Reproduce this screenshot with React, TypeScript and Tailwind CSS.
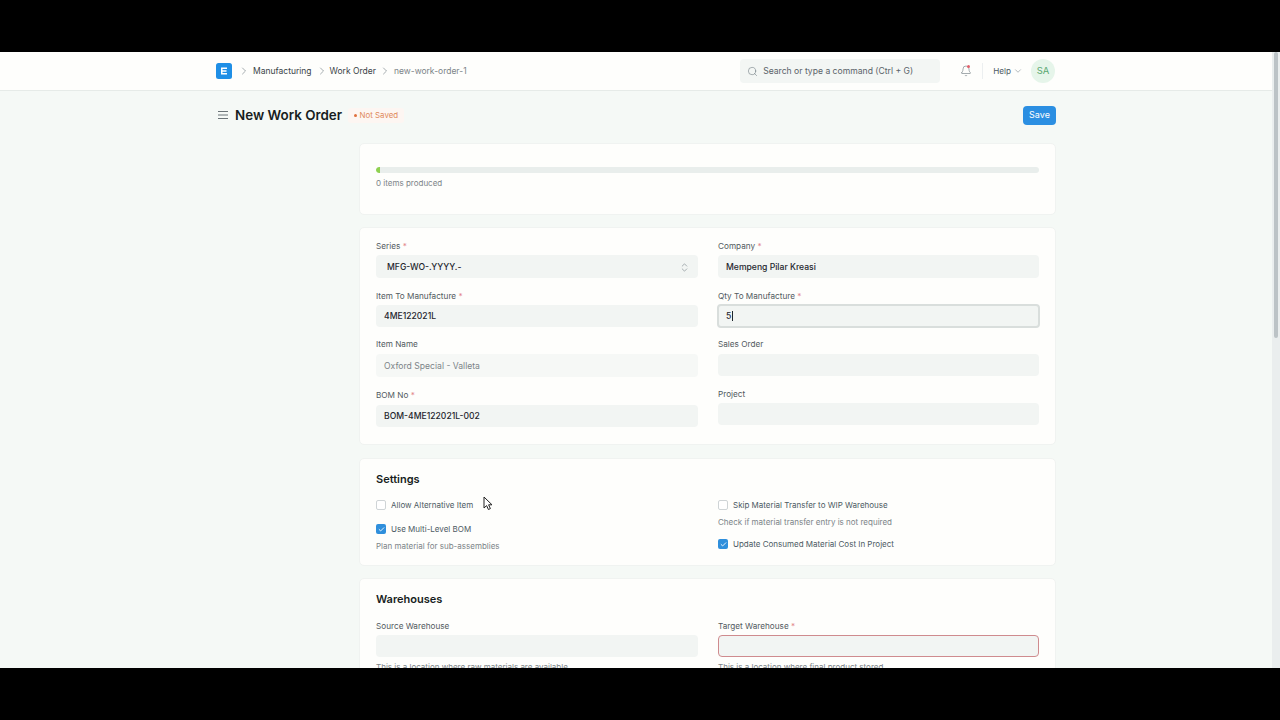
import { Bell, ChevronDown, ChevronRight, ChevronsUpDown, Search, Check } from "lucide-react";

function Label({ text, req }: { text: string; req?: boolean }) {
  return (
    <div className="h-[12px] leading-[12px] text-[8.2px] text-[#525a60] whitespace-nowrap">
      {text}
      {req && <span className="text-[#e2868c]"> *</span>}
    </div>
  );
}

function Box({ children, muted, focus, error, select, tall }: { children?: React.ReactNode; muted?: boolean; focus?: boolean; error?: boolean; select?: boolean; tall?: boolean }) {
  return (
    <div
      className={
        "rounded-[4px] flex items-center text-[8.6px] font-medium leading-none " +
        (tall ? "h-[23px] pt-[1px] " : focus ? "h-[24px] " : "h-[22px] ") +
        (focus
          ? "bg-[#f2f5f3] border-2 border-[#d9dedc] -mx-px pl-[7px] text-[#1f272e] "
          : error
            ? "bg-[#f2f5f3] border border-[#cf8b8e] px-2 text-[#1f272e] "
            : muted
              ? "bg-[#f6f8f6] px-2 text-[#7c8488] font-normal "
              : "bg-[#f2f5f3] px-2 text-[#1f272e] ") +
        (select ? "pl-[11px] justify-between" : "")
      }
    >
      {children}
    </div>
  );
}

function Checkbox({ on }: { on?: boolean }) {
  return on ? (
    <span className="w-[10px] h-[10px] rounded-[2px] bg-[#2f8fdc] flex items-center justify-center shrink-0">
      <Check size={7} strokeWidth={3} className="text-white" />
    </span>
  ) : (
    <span className="w-[10px] h-[10px] rounded-[2px] bg-white border border-[#cfd4d6] shrink-0" />
  );
}

function CheckRow({ on, text }: { on?: boolean; text: string }) {
  return (
    <div className="flex items-center gap-[5px] h-[12px] text-[8px] text-[#4c5a63] whitespace-nowrap">
      <Checkbox on={on} />
      {text}
    </div>
  );
}

function Hint({ text }: { text: string }) {
  return <div className="h-[12px] leading-[12px] text-[8px] text-[#7c8488] whitespace-nowrap">{text}</div>;
}

export default function App() {
  return (
    <div className="relative w-[1280px] h-[720px] bg-black overflow-hidden flex flex-col font-['Inter',sans-serif]">
      <div className="h-[52px] shrink-0" />
      <div className="h-[616px] shrink-0 flex overflow-hidden bg-[#f5f9f6]">
        <div className="flex-1 min-w-0 overflow-hidden">
          <header className="h-[39px] bg-[#fefefc] border-b border-[#e6ebe8] flex justify-center">
            <div className="w-[840px] flex items-center">
              <svg width="16" height="16" viewBox="0 0 16 16" className="shrink-0">
                <rect width="16" height="16" rx="2.5" fill="#1f8fe6" />
                <path d="M5 4.5h6v1.4H6.5v1.4H10.5v1.4H6.5v1.4H11v1.4H5z" fill="#fff" />
              </svg>
              <ChevronRight size={12} strokeWidth={1} className="ml-[6px] text-[#4c5a63]" />
              <span className="ml-[3px] text-[8.5px] text-[#3a4348]">Manufacturing</span>
              <ChevronRight size={12} strokeWidth={1} className="ml-[4px] text-[#4c5a63]" />
              <span className="ml-[2px] text-[8.5px] text-[#3a4348]">Work Order</span>
              <ChevronRight size={12} strokeWidth={1} className="ml-[3px] text-[#4c5a63]" />
              <span className="ml-[3px] text-[8.5px] text-[#7c8488]">new-work-order-1</span>
              <div className="ml-auto w-[200px] h-[24px] rounded-[4px] bg-[#f3f6f4] flex items-center pl-[7px] text-[8.6px] text-[#5a6268]">
                <Search size={11} strokeWidth={1} className="text-[#4c5a63]" />
                <span className="ml-[5px] whitespace-nowrap">Search or type a command (Ctrl + G)</span>
              </div>
              <div className="relative ml-[20px]">
                <Bell size={12} strokeWidth={1} className="text-[#4c5a63]" />
                <span className="absolute right-[2px] top-0 w-[3px] h-[3px] rounded-full bg-[#e2606a]" />
              </div>
              <span className="ml-[10px] w-px h-[16px] bg-[#eceff0]" />
              <span className="ml-[10px] text-[8.2px] text-[#4c5a63]">Help</span>
              <ChevronDown size={10} strokeWidth={1} className="ml-[2px] text-[#4c5a63]" />
              <span className="ml-[8px] w-[24px] h-[24px] mr-px rounded-full bg-[#e6f5ea] text-[#5aa870] text-[9.5px] flex items-center justify-center">SA</span>
            </div>
          </header>

          <div className="w-[840px] mx-auto">
            <div className="h-[48px] flex items-center">
              <svg width="12" height="12" viewBox="0 0 12 12" className="ml-[1px] shrink-0" stroke="#6b7478" strokeWidth="1">
                <path d="M1 2.5h10M1 6h10M1 9.5h10" />
              </svg>
              <h1 className="ml-[6px] mt-[1px] text-[13.4px] font-semibold text-[#171d21] leading-none whitespace-nowrap">New Work Order</h1>
              <span className="ml-[6px] mt-[1px] h-[15px] px-[6px] rounded-[3px] bg-[#fdf6f2] text-[7.9px] text-[#e08a5c] flex items-center gap-[3px] whitespace-nowrap">
                <span className="w-[2.5px] h-[2.5px] rounded-full bg-[#e0703c]" />
                Not Saved
              </span>
              <button className="ml-auto h-[19px] w-[33px] rounded-[4px] bg-[#2b8fe2] text-white text-[9px] flex items-center justify-center">Save</button>
            </div>

            <div className="ml-[143px] mt-[4px] flex flex-col">
              <section className="h-[72px] bg-[#fefefc] rounded-[5px] border border-[#f0f3f1] px-[16px] pt-[23px]">
                <div className="h-[6px] rounded-full bg-[#e9eeec] overflow-hidden">
                  <div className="w-[4px] h-full rounded-l-full bg-[#8fd14f]" />
                </div>
                <div className="mt-[4px] h-[12px] leading-[12px] text-[8px] text-[#7c8488]">0 items produced</div>
              </section>

              <section className="mt-[12px] h-[218px] bg-[#fefefc] rounded-[5px] border border-[#f0f3f1] px-[16px] pt-[12px] grid grid-cols-[322px_321px] gap-x-[20px] content-start">
                <div className="flex flex-col">
                  <Label text="Series" req />
                  <div className="mt-[3px]">
                    <Box select tall>
                      MFG-WO-.YYYY.-
                      <ChevronsUpDown size={11} strokeWidth={1} className="text-[#4c5a63]" />
                    </Box>
                  </div>
                  <div className="mt-[12px]"><Label text="Item To Manufacture" req /></div>
                  <div className="mt-[3px]"><Box>4ME122021L</Box></div>
                  <div className="mt-[11px]"><Label text="Item Name" /></div>
                  <div className="mt-[4px]"><Box muted tall>Oxford Special - Valleta</Box></div>
                  <div className="mt-[12px]"><Label text="BOM No" req /></div>
                  <div className="mt-[4px]"><Box>BOM-4ME122021L-002</Box></div>
                </div>
                <div className="flex flex-col">
                  <Label text="Company" req />
                  <div className="mt-[3px]"><Box tall>Mempeng Pilar Kreasi</Box></div>
                  <div className="mt-[12px]"><Label text="Qty To Manufacture" req /></div>
                  <div className="mt-[2px]">
                    <Box focus>
                      5<span className="ml-[1px] w-px h-[10px] bg-[#1f272e]" />
                    </Box>
                  </div>
                  <div className="mt-[10px]"><Label text="Sales Order" /></div>
                  <div className="mt-[4px]"><Box /></div>
                  <div className="mt-[12px]"><Label text="Project" /></div>
                  <div className="mt-[3px]"><Box /></div>
                </div>
              </section>

              <section className="mt-[13px] h-[108px] bg-[#fefefc] rounded-[5px] border border-[#f0f3f1] px-[16px] pt-[13px]">
                <h2 className="h-[14px] leading-[14px] text-[11px] font-semibold text-[#171d21]">Settings</h2>
                <div className="grid grid-cols-[322px_321px] gap-x-[20px] mt-[12px]">
                  <div className="flex flex-col pt-[1px]">
                    <CheckRow text="Allow Alternative Item" />
                    <div className="mt-[12px]"><CheckRow on text="Use Multi-Level BOM" /></div>
                    <div className="mt-[5px]"><Hint text="Plan material for sub-assemblies" /></div>
                  </div>
                  <div className="flex flex-col pt-[1px]">
                    <CheckRow text="Skip Material Transfer to WIP Warehouse" />
                    <div className="mt-[5px]"><Hint text="Check if material transfer entry is not required" /></div>
                    <div className="mt-[10px]"><CheckRow on text="Update Consumed Material Cost In Project" /></div>
                  </div>
                </div>
              </section>

              <section className="mt-[12px] h-[200px] bg-[#fefefc] rounded-[5px] border border-[#f0f3f1] px-[16px] pt-[13px]">
                <h2 className="h-[14px] leading-[14px] text-[11px] font-semibold text-[#171d21]">Warehouses</h2>
                <div className="grid grid-cols-[322px_321px] gap-x-[20px] mt-[14px]">
                  <div className="flex flex-col">
                    <Label text="Source Warehouse" />
                    <div className="mt-[3px]"><Box /></div>
                    <div className="mt-[4px]"><Hint text="This is a location where raw materials are available" /></div>
                  </div>
                  <div className="flex flex-col">
                    <Label text="Target Warehouse" req />
                    <div className="mt-[3px]"><Box error /></div>
                    <div className="mt-[4px]"><Hint text="This is a location where final product stored" /></div>
                  </div>
                </div>
              </section>
            </div>
          </div>
        </div>
        <div className="w-[8px] shrink-0 bg-[#eaeeee] flex justify-center">
          <div className="w-[4px] h-[286px] rounded-full bg-[#bcc3c6]" />
        </div>
      </div>
      <div className="flex-1" />
      <svg width="11" height="15" viewBox="0 0 11 15" className="absolute left-[483px] top-[496px]">
        <path d="M1 1v11l2.6-2.4L5.4 13.5l2-.9-1.8-3.8H9z" fill="#fff" stroke="#222" strokeWidth="1" />
      </svg>
    </div>
  );
}
